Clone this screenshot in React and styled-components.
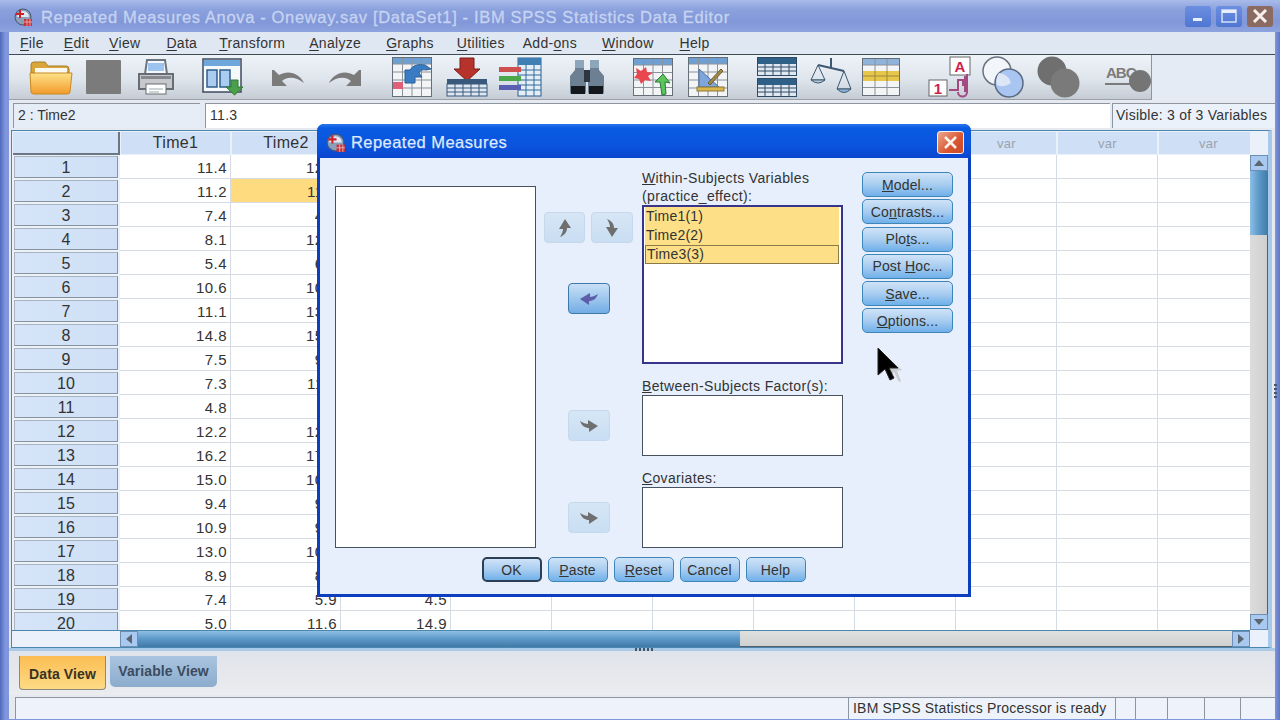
import React from "react";
import styled, { createGlobalStyle } from "styled-components";

const GlobalStyle = createGlobalStyle`
  html, body {
    margin: 0;
    padding: 0;
    background: #6f86cf;
  }
  * {
    box-sizing: border-box;
  }
`;

const Win = styled.div`
  width: 1280px;
  height: 720px;
  position: relative;
  overflow: hidden;
  display: flex;
  flex-direction: column;
  font-family: "Liberation Sans", Arial, sans-serif;
  background: linear-gradient(90deg, #4f69bb 0, #7f95dc 5px, #7f95dc 1275px, #5d76c6 1280px);
  color: #333;
`;

const TitleBar = styled.div`
  height: 32px;
  flex: none;
  display: flex;
  align-items: center;
  padding: 2px 7px 0 13px;
  gap: 8px;
  background: linear-gradient(180deg, #a9bbe9 0, #8ba1de 30%, #8197d8 70%, #8ea4df 100%);
`;

const TitleText = styled.div`
  flex: 1;
  font-size: 16.5px;
  letter-spacing: 0.65px;
  white-space: nowrap;
  color: #c6d3f1;
  -webkit-text-stroke: 0.3px #c6d3f1;
`;

const WinBtn = styled.div`
  width: 26px;
  height: 21px;
  margin: -2px 0 0 ${(p) => (p.$first ? 0 : -3)}px;
  border-radius: 3px;
  display: flex;
  align-items: center;
  justify-content: center;
  background: ${(p) =>
    p.$close ? "#8b6a62" : "linear-gradient(180deg,#6d8fe0,#4f76d2)"};
`;

const Body = styled.div`
  flex: 1;
  display: flex;
  flex-direction: column;
  margin: 0 5px 3px 9px;
  background: #e6e9ef;
  min-height: 0;
`;

const MenuBar = styled.div`
  height: 23px;
  flex: none;
  display: flex;
  align-items: center;
  padding-left: 11px;
  font-size: 14px;
  letter-spacing: 0.3px;
  color: #333;
  background: #dfe8f2;
  border-bottom: 1px solid #3f4a55;
`;

const MenuItem = styled.span`
  margin-right: ${(p) => p.$gap}px;
  u {
    text-underline-offset: 2px;
  }
`;

const ToolRow = styled.div`
  height: 45px;
  flex: none;
  display: flex;
  background: #e4ebf4;
`;

const Toolbar = styled.div`
  width: 1143px;
  height: 45px;
  position: relative;
  display: flex;
  align-items: center;
  padding-left: 7px;
  background: linear-gradient(180deg, #eef3f8 0, #dfe5ec 55%, #c5ccd5 100%);
  border-right: 1px solid #8d96a0;
  border-bottom: 1px solid #9aa2ac;
`;

const Grip = styled.div`
  width: 2px;
  height: 34px;
  margin-right: 13px;
  background: repeating-linear-gradient(180deg, #777 0 2px, transparent 2px 4px);
`;

const ToolIcon = styled.div`
  width: ${(p) => p.$w}px;
  height: 40px;
  margin-left: ${(p) => p.$ml}px;
  flex: none;
  display: flex;
  align-items: center;
  justify-content: center;
`;

const FormulaRow = styled.div`
  height: 25px;
  margin-top: 3px;
  flex: none;
  display: flex;
  font-size: 14px;
  background: #e4ebf4;
`;

const NameBox = styled.div`
  width: 187px;
  margin-left: 4px;
  padding: 3px 0 0 4px;
  border-top: 1px solid #8d96a0;
  border-left: 1px solid #8d96a0;
  background: #e6edf7;
`;

const ValueBox = styled.div`
  width: 905px;
  margin-left: 5px;
  padding: 3px 0 0 4px;
  letter-spacing: 0.3px;
  border-top: 1px solid #8d96a0;
  border-left: 1px solid #8d96a0;
  background: #fff;
`;

const VisibleBox = styled.div`
  flex: 1;
  margin-left: 2px;
  padding: 3px 0 0 3px;
  white-space: nowrap;
  font-size: 14px;
  letter-spacing: 0.25px;
  border-top: 1px solid #8d96a0;
  border-left: 1px solid #8d96a0;
  background: #eaf1fa;
`;

const Panel = styled.div`
  height: 518px;
  margin: 2px 3px 0 2px;
  flex: none;
  display: flex;
  border: 1px solid #4b87ad;
  border-right: 4px solid #a9c9ea;
  border-bottom: 1px solid #4b87ad;
  background: #eaf1fb;
`;

const Main = styled.div`
  flex: 1;
  min-width: 0;
  display: flex;
  flex-direction: column;
`;

const TableWrap = styled.div`
  flex: 1;
  min-height: 0;
  overflow: hidden;
  padding-left: 1px;
`;

const Table = styled.div`
  display: grid;
  grid-template-columns: 107px 111px 110px 110px repeat(8, 101px);
  grid-auto-rows: 24px;
  grid-template-rows: 24px;
  width: 1300px;
`;

const Corner = styled.div`
  margin: 1px 0 0 0;
  background: #d2e2f7;
  border-right: 2px solid #6b7783;
  border-bottom: 2px solid #6b7783;
`;

const ColHead = styled.div`
  margin: 1px;
  display: flex;
  align-items: center;
  justify-content: center;
  letter-spacing: 0.3px;
  background: #cfe0f6;
  color: ${(p) => (p.$var ? "#98a3ad" : "#333")};
  font-size: ${(p) => (p.$var ? 13 : 16)}px;
`;

const RowHead = styled.div`
  margin: 1px 2px 1px 1px;
  padding-top: 1px;
  display: flex;
  align-items: center;
  justify-content: center;
  font-size: 16px;
  background: linear-gradient(90deg, #d5e4f8, #cfe0f6);
  border: 1px solid #87939e;
  border-left-color: #aab4be;
  border-top-color: #aab4be;
`;

const Cell = styled.div`
  display: flex;
  align-items: center;
  justify-content: flex-end;
  padding: 2px 3px 0 0;
  font-size: 15px;
  letter-spacing: 0.45px;
  background: ${(p) => (p.$sel ? "#fddb7e" : "#fff")};
  border-right: 1px solid #d4dbe2;
  border-bottom: 1px solid #d4dbe2;
`;

const HScroll = styled.div`
  height: 17px;
  flex: none;
  display: flex;
  border-top: 1px solid #4b87ad;
`;

const HSpacer = styled.div`
  width: 108px;
  background: #eaf1fb;
`;

const ArrowBtn = styled.div`
  width: 18px;
  flex: none;
  display: flex;
  align-items: center;
  justify-content: center;
  background: #a9c9f1;
  border: 1px solid #6d8fb4;
`;

const HThumb = styled.div`
  width: 602px;
  background: linear-gradient(180deg, #8fbfe4 0, #5f9ccb 45%, #3f79a8 100%);
`;

const HTrack = styled.div`
  flex: 1;
  background: linear-gradient(180deg, #dfe0e0, #cfd0d0);
  border-bottom: 1px solid #555e66;
`;

const VScroll = styled.div`
  width: 18px;
  flex: none;
  display: flex;
  flex-direction: column;
  padding-top: 24px;
  padding-bottom: 17px;
  background: #eaf1fb;
`;

const VArrow = styled(ArrowBtn)`
  width: 18px;
  height: 16px;
`;

const VThumb = styled.div`
  height: 64px;
  background: linear-gradient(90deg, #8fbfe4 0, #5f9ccb 45%, #3f79a8 100%);
`;

const VTrack = styled.div`
  flex: 1;
  background: linear-gradient(90deg, #dcdcdc, #cfcfcf);
  border-right: 1px solid #555e66;
`;

const Splitter = styled.div`
  height: 3px;
  flex: none;
  position: relative;
  background: #a9cbe9;
`;

const Dots = styled.div`
  position: absolute;
  left: 626px;
  top: 0;
  width: 18px;
  height: 3px;
  background: repeating-linear-gradient(90deg, #44566a 0 2px, transparent 2px 4px);
`;

const TabStrip = styled.div`
  height: 44px;
  flex: none;
  display: flex;
  align-items: flex-start;
  padding: 5px 0 0 10px;
  gap: 4px;
  background: linear-gradient(180deg, #e0e3ea, #ebecef);
`;

const Tab = styled.div`
  display: flex;
  justify-content: center;
  font-size: 14px;
  font-weight: 700;
  letter-spacing: 0.1px;
  white-space: nowrap;
  ${(p) =>
    p.$active
      ? `
    width: 87px;
    height: 34px;
    padding-top: 10px;
    color: #3a3222;
    background: linear-gradient(180deg,#fbbd52,#fddb86);
    border: 1px solid #8c8a7c;
    border-top: none;
    border-radius: 0 0 4px 4px;
  `
      : `
    width: 107px;
    height: 31px;
    padding-top: 7px;
    color: #3c4c60;
    background: linear-gradient(180deg,#a9c4e0,#8caccd);
    border-radius: 0 0 5px 5px;
  `}
`;

const StatusBar = styled.div`
  height: 22px;
  flex: none;
  margin-top: 2px;
  display: flex;
  padding-left: 6px;
  font-size: 14px;
  letter-spacing: 0.2px;
  background: #e6e9ef;
`;

const StatusCell = styled.div`
  width: ${(p) => p.$w}px;
  flex: ${(p) => (p.$grow ? 1 : "none")};
  padding: 2px 0 0 4px;
  white-space: nowrap;
  border-top: 1px solid #8d96a0;
  border-left: 1px solid #8d96a0;
  background: #eef3fb;
`;

/* dialog sits over the data grid */
const Dialog = styled.div`
  position: absolute;
  left: 317px;
  top: 124px;
  width: 654px;
  height: 473px;
  display: flex;
  flex-direction: column;
  background: #0b3fc0;
  border-radius: 7px 7px 0 0;
  padding: 0 3px 3px 3px;
`;

const DialogTitle = styled.div`
  height: 34px;
  flex: none;
  display: flex;
  align-items: center;
  padding: 2px 7px 0 8px;
  gap: 5px;
  border-radius: 7px 7px 0 0;
  margin: 0 -3px;
  background: linear-gradient(180deg, #2a78ee 0, #0a5ae2 12%, #0a55de 60%, #0a45cf 100%);
`;

const DialogTitleText = styled.div`
  flex: 1;
  color: #dfe9fb;
  font-size: 16.5px;
  letter-spacing: 0.45px;
  -webkit-text-stroke: 0.25px #dfe9fb;
`;

const DialogClose = styled.div`
  width: 27px;
  height: 23px;
  display: flex;
  align-items: center;
  justify-content: center;
  border-radius: 3px;
  border: 1px solid #f1f3f8;
  background: linear-gradient(135deg, #eda88f, #d8552f 60%, #c84a28);
`;

const DialogBody = styled.div`
  flex: 1;
  display: flex;
  flex-direction: column;
  background: #e6effb;
  padding: 28px 0 0 15px;
`;

const DialogGrid = styled.div`
  display: grid;
  grid-template-columns: 201px 106px 201px 110px;
  height: 362px;
`;

const SourceList = styled.div`
  height: 362px;
  background: #fff;
  border: 1px solid #48525f;
`;

const ArrowCol = styled.div`
  display: flex;
  flex-direction: column;
  align-items: center;
`;

const ArrowPair = styled.div`
  display: flex;
  gap: 6px;
  margin-top: ${(p) => p.$mt}px;
  margin-left: ${(p) => p.$ml || 0}px;
`;

const ArrowButton = styled.div`
  width: ${(p) => p.$w || 42}px;
  height: 31px;
  display: flex;
  align-items: center;
  justify-content: center;
  border-radius: 4px;
  ${(p) =>
    p.$on
      ? `
    background: linear-gradient(180deg,#c9e0f6,#72ade6);
    border: 1px solid #3f79a8;
  `
      : `
    background: linear-gradient(180deg,#d6e6f5,#c9def3);
    border: 1px solid #c5d8ec;
  `}
`;

const TargetCol = styled.div`
  display: flex;
  flex-direction: column;
  margin-top: -17px;
`;

const Label = styled.div`
  font-size: 14px;
  letter-spacing: 0.35px;
  line-height: 18px;
  color: #333;
  margin-top: ${(p) => p.$mt || 0}px;
  white-space: nowrap;
`;

const ListBox = styled.div`
  width: 201px;
  height: ${(p) => p.$h}px;
  background: #fff;
  padding: 0 2px 0 1px;
  border: 1px solid ${(p) => (p.$focus ? "#38348c" : "#48525f")};
  border-width: ${(p) => (p.$focus ? 2 : 1)}px;
`;

const ListItem = styled.div`
  height: 19px;
  font-size: 14px;
  letter-spacing: 0.2px;
  padding-left: 1px;
  color: #333;
  background: #fddf88;
  border: ${(p) => (p.$cur ? "1px solid #8a7a48" : "none")};
  line-height: ${(p) => (p.$cur ? 17 : 18)}px;
`;

const SideButtons = styled.div`
  display: flex;
  flex-direction: column;
  gap: 2.3px;
  margin: -14px 0 0 19px;
`;

const DlgBtn = styled.div`
  width: ${(p) => p.$w || 91}px;
  height: 25px;
  display: flex;
  align-items: center;
  justify-content: center;
  font-size: 14px;
  letter-spacing: 0.15px;
  color: #333;
  white-space: nowrap;
  border-radius: 5px;
  border: 1px solid ${(p) => (p.$def ? "#2d3f55" : "#3f86b8")};
  border-width: ${(p) => (p.$def ? 2 : 1)}px;
  background: linear-gradient(180deg, #cfe3f7 0, #a9cdf0 50%, #6fb0ea 100%);
`;

const BottomRow = styled.div`
  display: flex;
  justify-content: center;
  gap: 6px;
  margin: 9px 0 0 -16px;
`;

const Cursor = styled.svg`
  position: absolute;
  left: 876px;
  top: 346px;
`;

const VDots = styled.div`
  position: absolute;
  left: 1274px;
  top: 384px;
  width: 3px;
  height: 14px;
  background: repeating-linear-gradient(180deg, #44566a 0 2px, transparent 2px 4px);
`;

// toolbar drawings
const AppIcon = ({ size = 20 }) => (
  <svg width={size} height={size} viewBox="0 0 20 20">
    <circle cx="10" cy="10" r="8" fill="#8b9fb8" stroke="#46566e" />
    <path d="M4 10a6 6 0 0 1 12 0z" fill="#dfe7f1" />
    <path d="M7 3v8M3 7h8" stroke="#d0202c" strokeWidth="2" />
    <rect x="11" y="12" width="8" height="7" fill="#c2333e" />
    <path d="M11 15h8M14 12v7M17 12v7" stroke="#f3c8c8" strokeWidth="0.7" />
  </svg>
);

const Folder = () => (
  <svg width="44" height="36" viewBox="0 0 44 36">
    <path d="M2 6q0-3 3-3h11l3 4h18q3 0 3 3v4H2z" fill="#d9a63c" stroke="#a97f2a" />
    <rect x="6" y="9" width="32" height="8" fill="#fbfaf2" />
    <path d="M1 14h42l-2 19q0 2-3 2H5q-3 0-3-2z" fill="url(#fold)" stroke="#c98a25" />
    <defs>
      <linearGradient id="fold" x1="0" y1="0" x2="0" y2="1">
        <stop offset="0" stopColor="#fde28a" />
        <stop offset="1" stopColor="#f39a2a" />
      </linearGradient>
    </defs>
  </svg>
);

const Printer = () => (
  <svg width="40" height="38" viewBox="0 0 40 38">
    <path d="M11 2h18l2 14H9z" fill="#f4f7fb" stroke="#6c7680" strokeWidth="2" />
    <rect x="12" y="5" width="16" height="8" fill="#9cc4ee" />
    <path d="M3 16h34v15H3z" fill="#c7c9cc" stroke="#676d73" strokeWidth="2" />
    <rect x="5" y="18" width="30" height="3" fill="#85898e" />
    <rect x="10" y="26" width="20" height="10" fill="#fff" stroke="#676d73" />
    <path d="M13 31h14M13 34h10" stroke="#9aa" />
  </svg>
);

const Recall = () => (
  <svg width="42" height="38" viewBox="0 0 42 38">
    <rect x="1" y="1" width="38" height="33" fill="#f6f9fc" stroke="#3f4a5c" strokeWidth="1.5" />
    <rect x="2" y="2" width="36" height="6" fill="#6fa6dc" />
    <rect x="5" y="12" width="10" height="17" fill="#a9ccf0" stroke="#2e5d8c" strokeWidth="1.5" />
    <rect x="18" y="12" width="10" height="17" fill="#a9ccf0" stroke="#2e5d8c" strokeWidth="1.5" />
    <path d="M29 22h7v7h5l-8.500 8-8.500-8h5z" fill="#4aa04a" stroke="#2e7a35" />
  </svg>
);

const Undo = ({ flip }) => (
  <svg width="36" height="20" viewBox="0 0 36 20" style={flip ? { transform: "scaleX(-1)" } : undefined}>
    <path d="M1 3v16h15l-5-5c6-5 14-4 22 2-4-9-15-14-25-8L3 3z" fill="#7b7b7b" />
  </svg>
);

const GrayRect = () => (
  <svg width="36" height="34" viewBox="0 0 36 34">
    <rect width="35" height="34" rx="1" fill="#7b7b7b" />
  </svg>
);

const GridBase = ({ children, w = 40, h = 40, head = "#6fa0d4", rows = 4, cols = 4 }) => {
  const lines = [];
  const cw = (w - 2) / cols;
  const rh = (h - 8) / rows;
  for (let i = 1; i < cols; i++) lines.push(`M${1 + i * cw} 1V${h - 1}`);
  for (let i = 0; i < rows; i++) lines.push(`M1 ${7 + i * rh}H${w - 1}`);
  return (
    <svg width={w} height={h} viewBox={`0 0 ${w} ${h}`}>
      <rect x="0.5" y="0.5" width={w - 1} height={h - 1} fill="#f2f4f6" stroke="#666e78" />
      <rect x="1" y="1" width={w - 2} height="6" fill={head} />
      <path d={lines.join("")} stroke="#8a929c" fill="none" />
      {children}
    </svg>
  );
};

const GotoCase = () => (
  <GridBase>
    <rect x="1" y="25" width="10" height="7" fill="#e0607a" />
    <path d="M13 26V13h5c3-5 8-6 15-5l6 4-5 1c-4-1-6 1-7 3l3 4h-7v6z" fill="#3a7cc4" stroke="#2c5f96" />
  </GridBase>
);

const GotoVar = () => (
  <svg width="42" height="40" viewBox="0 0 42 40">
    <path d="M14 1h14v11h6L21 24 8 12h6z" fill="#b5332a" stroke="#7b1f1a" />
    <rect x="1" y="22" width="40" height="5" fill="#39597c" />
    <rect x="1" y="27" width="40" height="12" fill="#dfe7f0" stroke="#39597c" />
    <path d="M1 31h40M1 35h40M9 27v12M17 27v12M25 27v12M33 27v12" stroke="#39597c" />
  </svg>
);

const Variables = () => (
  <svg width="44" height="40" viewBox="0 0 44 40">
    <rect x="20" y="1" width="23" height="38" fill="#e5eef7" stroke="#2e5d8c" />
    <rect x="20" y="1" width="23" height="7" fill="#3f7fb4" />
    <path d="M20 13h23M20 18h23M20 23h23M20 28h23M20 33h23M28 8v31M36 8v31" stroke="#2e6d9c" />
    <path d="M1 10h22v5H1z" fill="#cf4f4f" />
    <path d="M1 19h22v5H1z" fill="#4aa84a" />
    <path d="M1 28h22v5H1z" fill="#5a5fb4" />
  </svg>
);

const Binoculars = () => (
  <svg width="36" height="38" viewBox="0 0 36 38">
    <path d="M6 2h9v10l2 4v18q0 2-2 2H3q-2 0-2-2V18l5-6z" fill="#6d7f92" />
    <path d="M21 2h9v10l5 6v16q0 2-2 2H21q-2 0-2-2V16l2-4z" fill="#6d7f92" />
    <path d="M6 2h9v8H6zM21 2h9v8h-9z" fill="#8ea6bc" />
    <rect x="15" y="12" width="6" height="12" fill="#2d3540" />
    <rect x="2" y="28" width="14" height="8" fill="#14181d" />
    <rect x="20" y="28" width="14" height="8" fill="#14181d" />
  </svg>
);

const InsertCase = () => (
  <GridBase w={40} h={38}>
    <path d="M3 10l5 3 5-4 1 5 6 1-5 3 3 5-6-1-4 4-2-5-5-1 3-4z" fill="#ea4650" />
    <path d="M29 37l4-1-1-12 5 1-7-9-8 8 5 0c1 4 1 9 2 13z" fill="#5cc45c" stroke="#2a7a35" />
  </GridBase>
);

const InsertVar = () => (
  <GridBase w={40} h={40}>
    <path d="M11 12v18h20z" fill="#7fa6dc" stroke="#4a6fa5" />
    <path d="M20 26l13-14 2 2-13 14z" fill="#a58a4a" stroke="#6a5a2c" />
    <rect x="9" y="30" width="27" height="4" fill="#d9b54a" stroke="#8a7a3a" />
  </GridBase>
);

const SplitFile = () => (
  <svg width="40" height="40" viewBox="0 0 40 40">
    {[0, 21].map((y) => (
      <g key={y} transform={`translate(0 ${y})`}>
        <rect x="0.500" y="0.500" width="39" height="18" fill="#dfe7f0" stroke="#2f4a66" />
        <rect x="1" y="1" width="38" height="6" fill="#2f6088" />
        <path d="M1 10h38M1 14h38M8 7v12M16 7v12M24 7v12M32 7v12" stroke="#2f4a66" />
      </g>
    ))}
  </svg>
);

const Scale = () => (
  <svg width="42" height="40" viewBox="0 0 42 40">
    <path d="M21 1v10M8 8l26 6" stroke="#3d5870" strokeWidth="2" />
    <path d="M8 8L1 23h14zM34 14l-7 18h14z" fill="none" stroke="#3d5870" />
    <path d="M1 23q7 6 14 0z" fill="#b9c9d8" stroke="#3d5870" />
    <path d="M27 32q7 7 14 0z" fill="#8fb2d8" stroke="#3d5870" />
  </svg>
);

const SelectCases = () => (
  <GridBase w={38} h={38} head="#8fb4dc" rows={4} cols={3}>
    <rect x="1" y="13" width="36" height="10" fill="#e8c64a" />
    <path d="M1 18h36M13 13v10M25 13v10" stroke="#9a8a3a" />
  </GridBase>
);

const ValueLabels = () => (
  <svg width="44" height="42" viewBox="0 0 44 42">
    <rect x="22" y="1" width="20" height="18" fill="#fff" stroke="#666" />
    <text x="32" y="16" fontSize="15" fontWeight="700" textAnchor="middle" fill="#cc1f4f" fontFamily="Liberation Sans">A</text>
    <rect x="1" y="24" width="18" height="16" fill="#fff" stroke="#666" />
    <text x="10" y="38" fontSize="15" fontWeight="700" textAnchor="middle" fill="#cc1f4f" fontFamily="Liberation Sans">1</text>
    <path d="M21 34h9v-10h5v6M30 36a4 4 0 0 0 9 0V18M37 36V20" fill="none" stroke="#a34a80" strokeWidth="2" />
  </svg>
);

const Circles = () => (
  <svg width="44" height="42" viewBox="0 0 44 42">
    <circle cx="16" cy="15" r="14" fill="#f2f5f9" stroke="#6a7280" strokeWidth="1.500" />
    <circle cx="28" cy="27" r="14" fill="#a9c6f2" stroke="#5a6a80" strokeWidth="1.500" />
    <path d="M18 17a14 14 0 0 1 12 10 14 14 0 0 1-14 2 14 14 0 0 1 2-12z" fill="#dce6f5" />
  </svg>
);

const GrayCircles = () => (
  <svg width="44" height="42" viewBox="0 0 44 42">
    <circle cx="15" cy="15" r="14.500" fill="#6f6f6f" />
    <circle cx="28" cy="27" r="14.500" fill="#7a7a7a" />
  </svg>
);

const Spell = () => (
  <svg width="46" height="34" viewBox="0 0 46 34">
    <text x="1" y="18" fontSize="15" fontWeight="700" fill="#7b7b7b" letterSpacing="-1" fontFamily="Liberation Sans">ABC</text>
    <path d="M0 24h38" stroke="#7b7b7b" strokeWidth="2" />
    <circle cx="35" cy="21" r="11" fill="#757575" />
  </svg>
);

const arrowTurn = {
  up: "rotate(-90deg)",
  down: "scaleX(-1) rotate(90deg)",
  left: "scaleX(-1)",
  right: "none",
};

const ArrowGlyph = ({ dir, color = "#6f6f6f" }) => (
  <svg width="22" height="16" viewBox="0 0 22 16" style={{ transform: arrowTurn[dir] }}>
    <path d="M2 3c3 2 6 3 8 3V2l10 6-9 6v-4C7 10 4 8 2 3z" fill={color} />
  </svg>
);

const tools = [
  { C: Folder, w: 44, ml: 0 },
  { C: GrayRect, w: 36, ml: 13 },
  { C: Printer, w: 40, ml: 14 },
  { C: Recall, w: 42, ml: 26 },
  { C: Undo, w: 36, ml: 27 },
  { C: () => <Undo flip />, w: 36, ml: 19 },
  { C: GotoCase, w: 40, ml: 30 },
  { C: GotoVar, w: 42, ml: 14 },
  { C: Variables, w: 44, ml: 10 },
  { C: Binoculars, w: 36, ml: 27 },
  { C: InsertCase, w: 40, ml: 28 },
  { C: InsertVar, w: 40, ml: 15 },
  { C: SplitFile, w: 40, ml: 29 },
  { C: Scale, w: 42, ml: 13 },
  { C: SelectCases, w: 38, ml: 10 },
  { C: ValueLabels, w: 44, ml: 28 },
  { C: Circles, w: 44, ml: 9 },
  { C: GrayCircles, w: 44, ml: 12 },
  { C: Spell, w: 46, ml: 24 },
];

const menus = [
  ["F", "ile", 20],
  ["E", "dit", 20],
  ["V", "iew", 26],
  ["D", "ata", 22],
  ["T", "ransform", 24],
  ["A", "nalyze", 25],
  ["G", "raphs", 23],
  ["U", "tilities", 18],
  ["", "Add-ons", 25],
  ["W", "indow", 26],
  ["H", "elp", 0],
];

const data = [
  ["11.4", "12.4", "13.2"],
  ["11.2", "11.3", "12.7"],
  ["7.4", "4.5", "6.1"],
  ["8.1", "12.3", "13.0"],
  ["5.4", "6.2", "7.4"],
  ["10.6", "10.9", "12.5"],
  ["11.1", "13.2", "14.0"],
  ["14.8", "15.1", "16.3"],
  ["7.5", "9.0", "8.7"],
  ["7.3", "11.2", "10.4"],
  ["4.8", "", "6.5"],
  ["12.2", "12.8", "14.1"],
  ["16.2", "17.1", "17.9"],
  ["15.0", "10.6", "13.3"],
  ["9.4", "9.1", "10.2"],
  ["10.9", "9.8", "11.5"],
  ["13.0", "10.2", "12.6"],
  ["8.9", "8.4", "9.3"],
  ["7.4", "5.9", "4.5"],
  ["5.0", "11.6", "14.9"],
];

const App = () => {
  return (
    <Win>
      <GlobalStyle />
      <TitleBar>
        <AppIcon />
        <TitleText>Repeated Measures Anova - Oneway.sav [DataSet1] - IBM SPSS Statistics Data Editor</TitleText>
        <WinBtn $first>
          <svg width="14" height="12" viewBox="0 0 14 12">
            <rect x="2" y="8" width="9" height="3" fill="#e8eefb" />
          </svg>
        </WinBtn>
        <WinBtn>
          <svg width="16" height="14" viewBox="0 0 16 14">
            <rect x="1" y="1" width="14" height="12" fill="none" stroke="#d5e0f8" strokeWidth="1.500" />
            <rect x="1" y="1" width="14" height="3" fill="#e8eefb" />
          </svg>
        </WinBtn>
        <WinBtn $close>
          <svg width="16" height="14" viewBox="0 0 16 14">
            <path d="M2 1l12 12M14 1L2 13" stroke="#f5f0ee" strokeWidth="3" />
          </svg>
        </WinBtn>
      </TitleBar>
      <Body>
        <MenuBar>
          {menus.map(([u, rest, gap]) => (
            <MenuItem key={rest} $gap={gap}>
              {rest === "Add-ons" ? (
                <>
                  Add-<u>o</u>ns
                </>
              ) : (
                <>
                  <u>{u}</u>
                  {rest}
                </>
              )}
            </MenuItem>
          ))}
        </MenuBar>
        <ToolRow>
          <Toolbar>
            <Grip />
            {tools.map(({ C, w, ml }, i) => (
              <ToolIcon key={i} $w={w} $ml={ml}>
                <C />
              </ToolIcon>
            ))}
          </Toolbar>
        </ToolRow>
        <FormulaRow>
          <NameBox>2 : Time2</NameBox>
          <ValueBox>11.3</ValueBox>
          <VisibleBox>Visible: 3 of 3 Variables</VisibleBox>
        </FormulaRow>
        <Panel>
          <Main>
            <TableWrap>
              <Table>
                <Corner />
                <ColHead>Time1</ColHead>
                <ColHead>Time2</ColHead>
                <ColHead />
                {Array.from({ length: 8 }).map((_, i) => (
                  <ColHead key={i} $var>
                    {i < 5 ? "" : "var"}
                  </ColHead>
                ))}
                {data.map((row, r) => (
                  <React.Fragment key={r}>
                    <RowHead>{r + 1}</RowHead>
                    {row.map((v, c) => (
                      <Cell key={c} $sel={r === 1 && c === 1}>
                        {v}
                      </Cell>
                    ))}
                    {Array.from({ length: 8 }).map((_, i) => (
                      <Cell key={i} />
                    ))}
                  </React.Fragment>
                ))}
              </Table>
            </TableWrap>
            <HScroll>
              <HSpacer />
              <ArrowBtn>
                <svg width="8" height="10" viewBox="0 0 8 10">
                  <path d="M7 0v10L1 5z" fill="#5c6670" />
                </svg>
              </ArrowBtn>
              <HThumb />
              <HTrack />
              <ArrowBtn>
                <svg width="8" height="10" viewBox="0 0 8 10">
                  <path d="M1 0v10l6-5z" fill="#5c6670" />
                </svg>
              </ArrowBtn>
            </HScroll>
          </Main>
          <VScroll>
            <VArrow>
              <svg width="10" height="6" viewBox="0 0 10 6">
                <path d="M0 6h10L5 0z" fill="#5c6670" />
              </svg>
            </VArrow>
            <VThumb />
            <VTrack />
            <VArrow>
              <svg width="10" height="6" viewBox="0 0 10 6">
                <path d="M0 0h10L5 6z" fill="#5c6670" />
              </svg>
            </VArrow>
          </VScroll>
        </Panel>
        <Splitter>
          <Dots />
        </Splitter>
        <TabStrip>
          <Tab $active>Data View</Tab>
          <Tab>Variable View</Tab>
        </TabStrip>
        <StatusBar>
          <StatusCell $grow />
          <StatusCell $w={267}>IBM SPSS Statistics Processor is ready</StatusCell>
          <StatusCell $w={20} />
          <StatusCell $w={32} />
          <StatusCell $w={37} />
          <StatusCell $w={36} />
          <StatusCell $w={35} />
        </StatusBar>
      </Body>

      <VDots />

      <Dialog>
        <DialogTitle>
          <AppIcon size={21} />
          <DialogTitleText>Repeated Measures</DialogTitleText>
          <DialogClose>
            <svg width="15" height="13" viewBox="0 0 15 13">
              <path d="M2 1l11 11M13 1L2 12" stroke="#fbf3ef" strokeWidth="2.500" />
            </svg>
          </DialogClose>
        </DialogTitle>
        <DialogBody>
          <DialogGrid>
            <SourceList />
            <ArrowCol>
              <ArrowPair $mt={26} $ml={-1}>
                <ArrowButton $w={41}>
                  <ArrowGlyph dir="up" />
                </ArrowButton>
                <ArrowButton $w={42}>
                  <ArrowGlyph dir="down" />
                </ArrowButton>
              </ArrowPair>
              <ArrowPair $mt={40}>
                <ArrowButton $on>
                  <ArrowGlyph dir="left" color="#5d5da8" />
                </ArrowButton>
              </ArrowPair>
              <ArrowPair $mt={96}>
                <ArrowButton>
                  <ArrowGlyph dir="right" />
                </ArrowButton>
              </ArrowPair>
              <ArrowPair $mt={61}>
                <ArrowButton>
                  <ArrowGlyph dir="right" />
                </ArrowButton>
              </ArrowPair>
            </ArrowCol>
            <TargetCol>
              <Label>
                <u>W</u>ithin-Subjects Variables
              </Label>
              <Label>(practice_effect):</Label>
              <ListBox $h={159} $focus>
                <ListItem>Time1(1)</ListItem>
                <ListItem>Time2(2)</ListItem>
                <ListItem $cur>Time3(3)</ListItem>
              </ListBox>
              <Label $mt={13}>
                <u>B</u>etween-Subjects Factor(s):
              </Label>
              <ListBox $h={61} />
              <Label $mt={13}>
                <u>C</u>ovariates:
              </Label>
              <ListBox $h={61} />
            </TargetCol>
            <SideButtons>
              <DlgBtn>
                <span>
                  <u>M</u>odel...
                </span>
              </DlgBtn>
              <DlgBtn>
                <span>
                  Co<u>n</u>trasts...
                </span>
              </DlgBtn>
              <DlgBtn>
                <span>
                  Plo<u>t</u>s...
                </span>
              </DlgBtn>
              <DlgBtn>
                <span>
                  Post <u>H</u>oc...
                </span>
              </DlgBtn>
              <DlgBtn>
                <span>
                  <u>S</u>ave...
                </span>
              </DlgBtn>
              <DlgBtn>
                <span>
                  <u>O</u>ptions...
                </span>
              </DlgBtn>
            </SideButtons>
          </DialogGrid>
          <BottomRow>
            <DlgBtn $w={60} $def>
              OK
            </DlgBtn>
            <DlgBtn $w={60}>
              <span>
                <u>P</u>aste
              </span>
            </DlgBtn>
            <DlgBtn $w={60}>
              <span>
                <u>R</u>eset
              </span>
            </DlgBtn>
            <DlgBtn $w={60}>Cancel</DlgBtn>
            <DlgBtn $w={60}>Help</DlgBtn>
          </BottomRow>
        </DialogBody>
      </Dialog>

      <Cursor width="30" height="38" viewBox="0 0 30 38">
        <path d="M5 5l21 19-5 1 4 10-2 1-5-10-4 4z" fill="#b5b5b5" opacity="0.6" />
        <path d="M2 2v27l7-6 5 11 4-2-5-10h9z" fill="#000" stroke="#222" />
      </Cursor>
    </Win>
  );
};

export default App;
